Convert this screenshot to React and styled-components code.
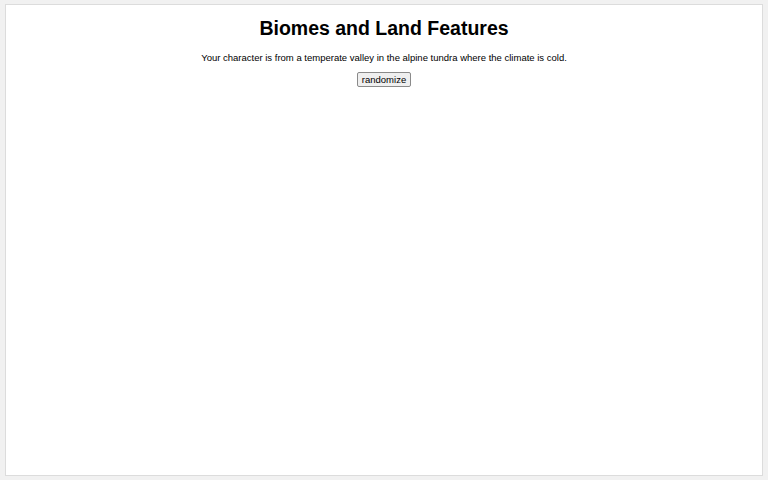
import React, { useState } from 'react';
import styled, { createGlobalStyle } from 'styled-components';

const GlobalStyle = createGlobalStyle`
  html, body {
    margin: 0;
    padding: 0;
    height: 100%;
    background: #f1f1f1;
    font-family: "Liberation Sans", Arial, sans-serif;
  }
  #root {
    height: 100%;
  }
`;

const Page = styled.div`
  box-sizing: border-box;
  height: 100vh;
  padding: 4px 5px 4px 5px;
`;

const Card = styled.main`
  box-sizing: border-box;
  height: 100%;
  background: #fff;
  border: 1px solid #dcdcdc;
  display: flex;
  flex-direction: column;
  align-items: center;
  padding-top: 12px;
`;

const Title = styled.h1`
  margin: 0;
  font-size: 19.5px;
  font-weight: bold;
  color: #000;
`;

const Blurb = styled.p`
  margin: 12px 0 0;
  font-size: 9.5px;
  color: #000;
`;

const Button = styled.button`
  margin-top: 9px;
  font-family: "Liberation Sans", Arial, sans-serif;
  font-size: 9.5px;
  line-height: 11px;
  padding: 1px 4px;
  background: #efefef;
  border: 1px solid #8a8a8a;
  border-radius: 2px;
  color: #000;
`;

export default function App() {
  const [pick] = useState({ feature: 'temperate valley', biome: 'alpine tundra', climate: 'cold' });
  return (
    <>
      <GlobalStyle />
      <Page>
        <Card>
          <Title>Biomes and Land Features</Title>
          <Blurb>
            Your character is from a {pick.feature} in the {pick.biome} where the climate is {pick.climate}.
          </Blurb>
          <Button type="button">randomize</Button>
        </Card>
      </Page>
    </>
  );
}
